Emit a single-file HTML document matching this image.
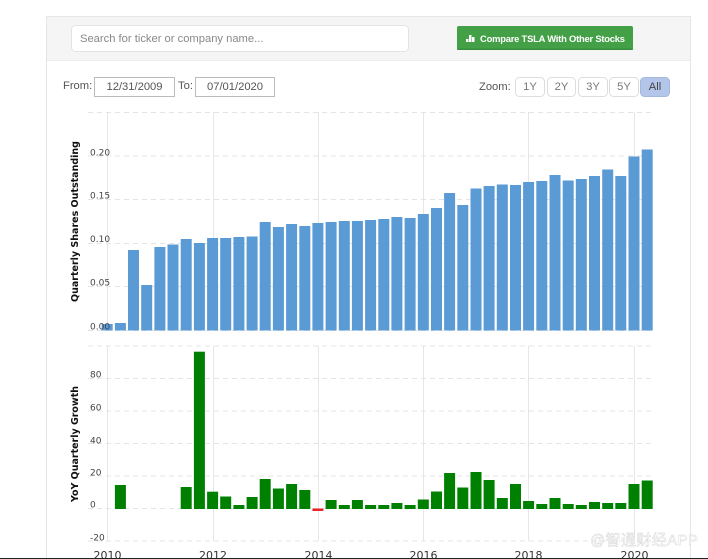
<!DOCTYPE html>
<html><head><meta charset="utf-8">
<style>
html,body{margin:0;padding:0;background:#fff;width:708px;height:559px;overflow:hidden}
svg{display:block}
.l{font:9px "DejaVu Sans",sans-serif;fill:#444}
.y{font:11px "DejaVu Sans",sans-serif;fill:#333;text-anchor:middle}
.t{font:bold 9.5px "DejaVu Sans",sans-serif;fill:#111}
.r{font:11.2px "Liberation Sans",sans-serif;fill:#555}
.z{font:11.2px "Liberation Sans",sans-serif;fill:#777;text-anchor:middle}
.d{font:11.2px "Liberation Sans",sans-serif;fill:#555;text-anchor:middle}
g.g line{stroke:#e4e4e4;stroke-width:1;stroke-dasharray:5 4}
g.v line{stroke:#e6e6e6;stroke-width:1}
g.b rect{fill:#5b9bd5;width:11px}
g.c rect{fill:#008000;width:11px}
</style></head><body>
<svg width="708" height="559" viewBox="0 0 708 559" xmlns="http://www.w3.org/2000/svg">
<rect x="46.5" y="16.5" width="644" height="560" fill="#fff" stroke="#e5e5e5"/>
<rect x="47" y="17" width="643" height="43" fill="#f5f5f5"/>
<line x1="47" x2="690" y1="60.5" y2="60.5" stroke="#ececec"/>
<rect x="71.5" y="25.5" width="337" height="26" rx="4" fill="#fff" stroke="#e3e3e3"/>
<text x="80" y="42" style="font:11.2px 'Liberation Sans',sans-serif;fill:#888">Search for ticker or company name...</text>
<rect x="457" y="26" width="176" height="24" rx="2" fill="#43a047"/>
<rect x="457" y="48.5" width="176" height="1.5" rx="1" fill="#388e3c"/>
<path d="M466 42h2.5v-3H466zM469 42h2.5v-7H469zM472 42h2.5v-5H472z" fill="#fff"/>
<text x="480" y="42" style="font:bold 9.4px 'Liberation Sans',sans-serif;fill:#fff" textLength="145">Compare TSLA With Other Stocks</text>

<text class="r" x="63" y="89">From:</text>
<rect x="94.5" y="77.5" width="80" height="19" fill="#fff" stroke="#bbb"/>
<text class="d" x="134.5" y="90">12/31/2009</text>
<text class="r" x="178" y="89">To:</text>
<rect x="195.5" y="77.5" width="79" height="19" fill="#fff" stroke="#bbb"/>
<text class="d" x="235" y="90">07/01/2020</text>

<text class="r" x="479" y="90">Zoom:</text>
<rect x="515.5" y="77.5" width="29" height="19" rx="4" fill="#fff" stroke="#ddd"/>
<rect x="547.5" y="77.5" width="28" height="19" rx="4" fill="#fff" stroke="#ddd"/>
<rect x="578.5" y="77.5" width="29" height="19" rx="4" fill="#fff" stroke="#ddd"/>
<rect x="609.5" y="77.5" width="29" height="19" rx="4" fill="#fff" stroke="#ddd"/>
<rect x="640.5" y="77.5" width="29" height="19" rx="4" fill="#b3c6ea" stroke="#a3b8e0"/>
<text class="z" x="530" y="90">1Y</text>
<text class="z" x="561.5" y="90">2Y</text>
<text class="z" x="593" y="90">3Y</text>
<text class="z" x="624" y="90">5Y</text>
<text class="z" x="655" y="90" style="fill:#444">All</text>

<g class="v">
<line x1="107.5" x2="107.5" y1="112" y2="330"/><line x1="213.5" x2="213.5" y1="112" y2="330"/><line x1="318.5" x2="318.5" y1="112" y2="330"/><line x1="423.5" x2="423.5" y1="112" y2="330"/><line x1="528.5" x2="528.5" y1="112" y2="330"/><line x1="634.5" x2="634.5" y1="112" y2="330"/>
<line x1="107.5" x2="107.5" y1="346" y2="541"/><line x1="213.5" x2="213.5" y1="346" y2="541"/><line x1="318.5" x2="318.5" y1="346" y2="541"/><line x1="423.5" x2="423.5" y1="346" y2="541"/><line x1="528.5" x2="528.5" y1="346" y2="541"/><line x1="634.5" x2="634.5" y1="346" y2="541"/>
</g>
<g class="g">
<line x1="88" x2="652" y1="112.5" y2="112.5"/><line x1="88" x2="652" y1="156" y2="156"/><line x1="88" x2="652" y1="199.5" y2="199.5"/><line x1="88" x2="652" y1="243.5" y2="243.5"/><line x1="88" x2="652" y1="286.5" y2="286.5"/><line x1="88" x2="652" y1="330.5" y2="330.5"/>
<line x1="88" x2="652" y1="346" y2="346"/><line x1="88" x2="652" y1="378.5" y2="378.5"/><line x1="88" x2="652" y1="411" y2="411"/><line x1="88" x2="652" y1="443.5" y2="443.5"/><line x1="88" x2="652" y1="476" y2="476"/><line x1="88" x2="652" y1="508.5" y2="508.5"/><line x1="88" x2="652" y1="541" y2="541"/>
</g>

<g class="b">
<rect x="101.7" y="324" height="6.5"/><rect x="114.9" y="323" height="7.5"/><rect x="128" y="250" height="80.5"/><rect x="141.2" y="285" height="45.5"/><rect x="154.4" y="247" height="83.5"/><rect x="167.5" y="244.5" height="86"/><rect x="180.7" y="239" height="91.5"/><rect x="193.9" y="243" height="87.5"/><rect x="207.1" y="238" height="92.5"/><rect x="220.2" y="238" height="92.5"/><rect x="233.4" y="237" height="93.5"/><rect x="246.6" y="236.5" height="94"/><rect x="259.7" y="222" height="108.5"/><rect x="272.9" y="227" height="103.5"/><rect x="286.1" y="224" height="106.5"/><rect x="299.3" y="226" height="104.5"/><rect x="312.4" y="223" height="107.5"/><rect x="325.6" y="222" height="108.5"/><rect x="338.8" y="221" height="109.5"/><rect x="351.9" y="221" height="109.5"/><rect x="365.1" y="220" height="110.5"/><rect x="378.3" y="219" height="111.5"/><rect x="391.4" y="217" height="113.5"/><rect x="404.6" y="218" height="112.5"/><rect x="417.8" y="214" height="116.5"/><rect x="431" y="208" height="122.5"/><rect x="444.1" y="193" height="137.5"/><rect x="457.3" y="205" height="125.5"/><rect x="470.5" y="188.5" height="142"/><rect x="483.6" y="186" height="144.5"/><rect x="496.8" y="184.5" height="146"/><rect x="510" y="185" height="145.5"/><rect x="523.1" y="182" height="148.5"/><rect x="536.3" y="181" height="149.5"/><rect x="549.5" y="175" height="155.5"/><rect x="562.7" y="180.5" height="150"/><rect x="575.8" y="179" height="151.5"/><rect x="589" y="176" height="154.5"/><rect x="602.2" y="169.5" height="161"/><rect x="615.3" y="176" height="154.5"/><rect x="628.5" y="156.5" height="174"/><rect x="641.7" y="149.5" height="181"/>
</g>

<g class="c">
<rect x="114.9" y="485" height="24"/><rect x="180.7" y="487" height="22"/><rect x="193.9" y="351.7" height="157.3"/><rect x="207.1" y="491.7" height="17.3"/><rect x="220.2" y="496.5" height="12.5"/><rect x="233.4" y="505" height="4"/><rect x="246.6" y="497" height="12"/><rect x="259.7" y="479" height="30"/><rect x="272.9" y="488.5" height="20.5"/><rect x="286.1" y="484" height="25"/><rect x="299.3" y="490" height="19"/><rect x="325.6" y="500" height="9"/><rect x="338.8" y="505" height="4"/><rect x="351.9" y="500" height="9"/><rect x="365.1" y="505" height="4"/><rect x="378.3" y="505" height="4"/><rect x="391.4" y="503" height="6"/><rect x="404.6" y="505" height="4"/><rect x="417.8" y="499.5" height="9.5"/><rect x="431" y="491.5" height="17.5"/><rect x="444.1" y="473" height="36"/><rect x="457.3" y="487.5" height="21.5"/><rect x="470.5" y="472" height="37"/><rect x="483.6" y="480" height="29"/><rect x="496.8" y="498" height="11"/><rect x="510" y="484" height="25"/><rect x="523.1" y="501" height="8"/><rect x="536.3" y="504" height="5"/><rect x="549.5" y="498" height="11"/><rect x="562.7" y="504" height="5"/><rect x="575.8" y="505" height="4"/><rect x="589" y="502" height="7"/><rect x="602.2" y="503" height="6"/><rect x="615.3" y="503" height="6"/><rect x="628.5" y="484" height="25"/><rect x="641.7" y="480.5" height="28.5"/>
</g>
<rect x="312.4" y="508.5" width="11" height="2.5" fill="#e8262a"/>

<text class="l" x="90" y="155.5">0.20</text>
<text class="l" x="90" y="198.5">0.15</text>
<text class="l" x="90" y="242">0.10</text>
<text class="l" x="90" y="285.5">0.05</text>
<text class="l" x="90" y="329.5">0.00</text>
<text class="l" x="90" y="377.5">80</text>
<text class="l" x="90" y="410.5">60</text>
<text class="l" x="90" y="443.5">40</text>
<text class="l" x="90" y="475.5">20</text>
<text class="l" x="90" y="507.5">0</text>
<text class="l" x="90" y="540.5">-20</text>

<text class="t" transform="translate(78,302) rotate(-90)" textLength="161">Quarterly Shares Outstanding</text>
<text class="t" transform="translate(78,502) rotate(-90)" textLength="116">YoY Quarterly Growth</text>

<text class="y" x="107.5" y="559">2010</text>
<text class="y" x="213" y="559">2012</text>
<text class="y" x="318.5" y="559">2014</text>
<text class="y" x="423.5" y="559">2016</text>
<text class="y" x="528.5" y="559">2018</text>
<text class="y" x="634.5" y="559">2020</text>

<text x="590" y="545" style="font:15px 'Liberation Sans','Noto Sans CJK SC',sans-serif;fill:#fff;stroke:#d0d0d0;stroke-width:.4" textLength="108">@智通财经APP</text>
<rect x="0" y="558" width="708" height="1" fill="#222"/>
</svg>
</body></html>
